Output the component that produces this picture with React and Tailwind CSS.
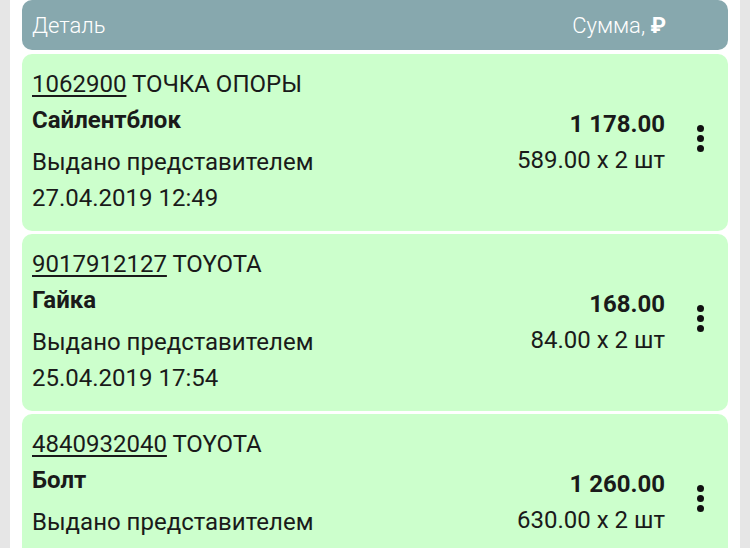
import React from "react";

const items = [
  { code: "1062900", brand: "ТОЧКА ОПОРЫ", name: "Сайлентблок", date: "27.04.2019 12:49", sum: "1 178.00", qty: "589.00 x 2 шт" },
  { code: "9017912127", brand: "TOYOTA", name: "Гайка", date: "25.04.2019 17:54", sum: "168.00", qty: "84.00 x 2 шт" },
  { code: "4840932040", brand: "TOYOTA", name: "Болт", date: "", sum: "1 260.00", qty: "630.00 x 2 шт" },
];

function Dots() {
  return (
    <div className="flex flex-col items-center gap-[3px] w-[8px]">
      <span className="block w-[7px] h-[7px] rounded-full bg-[#111]" />
      <span className="block w-[7px] h-[7px] rounded-full bg-[#111]" />
      <span className="block w-[7px] h-[7px] rounded-full bg-[#111]" />
    </div>
  );
}

function Card({ it }) {
  return (
    <div className="flex items-center rounded-[10px] bg-[#ccffcc] pl-[10px] pr-[24px] pt-[15px] pb-[18px] text-[#1a1a1a]">
      <div className="flex-1 flex flex-col">
        <div className="leading-[30px] text-[24px]">
          <span className="underline underline-offset-[3px] decoration-[1.5px]">{it.code}</span> {it.brand}
        </div>
        <div className="leading-[30px] text-[24px] font-bold mt-[6px]">{it.name}</div>
        <div className="leading-[30px] text-[24px] mt-[12px]">Выдано представителем</div>
        <div className="leading-[30px] text-[24px] mt-[6px]">{it.date || "\u00a0"}</div>
      </div>
      <div className="flex flex-col items-end mt-[2px]">
        <div className="leading-[30px] text-[24px] font-bold">{it.sum}</div>
        <div className="leading-[30px] text-[24px] mt-[6px]">{it.qty}</div>
      </div>
      <div className="ml-[31px] -mt-[5px]">
        <Dots />
      </div>
    </div>
  );
}

export default function App() {
  return (
    <div className="w-[750px] h-[548px] overflow-hidden bg-[#e6e6e6] px-[10px]" style={{ fontFamily: "Roboto, 'Noto Sans', sans-serif" }}>
      <div className="bg-white h-full px-[12px] flex flex-col gap-[3px]">
        <div className="h-[50px] rounded-[10px] bg-[#87a8ae] flex items-center justify-between pl-[10px] pr-[62px] text-white text-[22px] font-light shrink-0">
          <span>Деталь</span>
          <span>Сумма, <span className="font-bold">₽</span></span>
        </div>
        <div className="mt-[1px] flex flex-col gap-[3px]">
          {items.map((it, i) => (
            <Card key={i} it={it} />
          ))}
        </div>
      </div>
    </div>
  );
}
